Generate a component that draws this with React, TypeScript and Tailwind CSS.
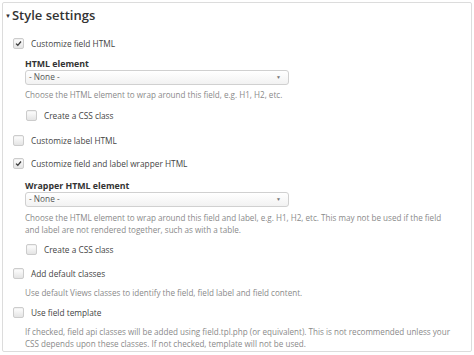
import React from "react";

function Check({ checked }: { checked?: boolean }) {
  return (
    <span className="relative inline-block w-[11px] h-[11px] shrink-0 rounded-[2px] border border-[#cccccc] bg-gradient-to-b from-white to-[#e4e4e4] shadow-[inset_0_1px_1px_rgba(0,0,0,0.06)]">
      {checked && (
        <svg viewBox="0 0 10 10" className="absolute left-[1px] top-[1px] w-[7px] h-[7px]">
          <path d="M1.5 5.2 L4 7.6 L8.6 2.2" fill="none" stroke="#3a3a3a" strokeWidth="1.9" />
        </svg>
      )}
    </span>
  );
}

function CheckRow({ label, checked, nested, className }: { label: string; checked?: boolean; nested?: boolean; className?: string }) {
  return (
    <div className={`flex items-center h-[12px] ${nested ? "pl-[23px]" : "pl-[10px]"} ${className ?? ""}`}>
      <Check checked={checked} />
      <span className="ml-[7px] text-[8.3px] leading-[12px] text-[#444] mt-[2px]">{label}</span>
    </div>
  );
}

function Select() {
  return (
    <div className="ml-[22px] w-[264px] h-[15px] rounded-[3px] border border-[#d0d0d0] bg-gradient-to-b from-white to-[#f2f2f2] flex items-center justify-between px-[3px]">
      <span className="text-[8.3px] text-[#555] leading-none">- None -</span>
      <span className="text-[5px] text-[#777] leading-none mr-[4px]">▼</span>
    </div>
  );
}

function Desc({ children, className }: { children: React.ReactNode; className?: string }) {
  return <p className={`pl-[22px] pr-[18px] text-[8.1px] leading-[12px] text-[#8a8a8a] ${className ?? ""}`}>{children}</p>;
}

export default function App() {
  return (
    <div className="w-[474px] h-[355px] bg-white p-[2px] pb-[3px]" style={{ fontFamily: "'Open Sans', 'Liberation Sans', sans-serif" }}>
      <div className="h-full w-[470px] border border-[#dcdcdc] rounded-[2px]">
        <div className="flex items-center h-[24px] mt-[1px] pl-[2px]">
          <span className="text-[6px] text-[#333] mr-[1px] mt-[1px]">▼</span>
          <span className="text-[13px] font-semibold text-[#333]">Style settings</span>
        </div>

        <CheckRow label="Customize field HTML" checked className="mt-[9px]" />
        <div className="pl-[22px] mt-[9px] text-[8.8px] font-bold text-[#333] leading-[12px]">HTML element</div>
        <Select />
        <Desc className="mt-[4px]">Choose the HTML element to wrap around this field, e.g. H1, H2, etc.</Desc>
        <CheckRow label="Create a CSS class" nested className="mt-[8px]" />

        <CheckRow label="Customize label HTML" className="mt-[13px]" />
        <CheckRow label="Customize field and label wrapper HTML" checked className="mt-[11px]" />

        <div className="pl-[22px] mt-[11px] text-[8.8px] font-bold text-[#333] leading-[12px]">Wrapper HTML element</div>
        <Select />
        <Desc className="mt-[5px]">
          Choose the HTML element to wrap around this field and label, e.g. H1, H2, etc. This may not be used if the field and label are not rendered together, such as with a table.
        </Desc>
        <CheckRow label="Create a CSS class" nested className="mt-[7px]" />

        <CheckRow label="Add default classes" className="mt-[12px]" />
        <Desc className="mt-[8px]">Use default Views classes to identify the field, field label and field content.</Desc>
        <CheckRow label="Use field template" className="mt-[7px]" />
        <Desc className="mt-[8px]">
          If checked, field api classes will be added using field.tpl.php (or equivalent). This is not recommended unless your CSS depends upon these classes. If not checked, template will not be used.
        </Desc>
      </div>
    </div>
  );
}
